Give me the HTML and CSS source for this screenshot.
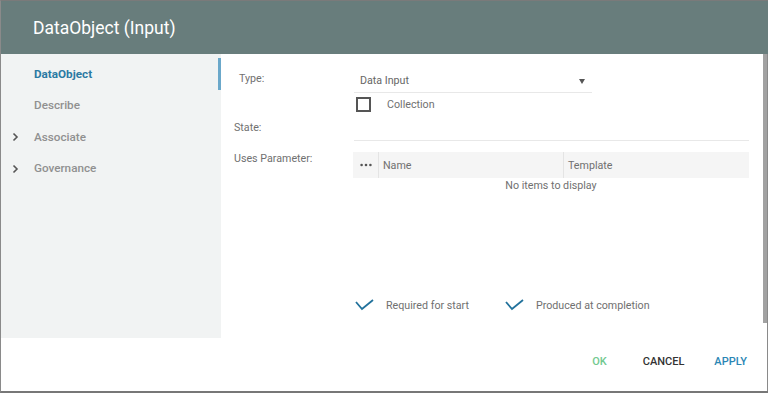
FILE: index.html
```html
<!DOCTYPE html>
<html lang="en">
<head>
  <meta charset="UTF-8">
  <meta name="viewport" content="width=device-width, initial-scale=1.0">
  <title>DataObject (Input)</title>
  <link rel="stylesheet" href="styles.css">
</head>
<body>
  <div class="dialog">
    <div class="dialog-header">DataObject (Input)</div>

    <div class="dialog-body">
      <div class="dialog-main">
        <div class="main">
          <ul class="nav">
            <li class="nav-item active">DataObject</li>
            <li class="nav-item">Describe</li>
            <li class="nav-item">
              <svg class="chevron" width="7" height="10" viewBox="0 0 7 10"><path d="M1.5 1.5 L5 5 L1.5 8.5" fill="none" stroke="#555" stroke-width="1.6"/></svg>
              Associate
            </li>
            <li class="nav-item">
              <svg class="chevron" width="7" height="10" viewBox="0 0 7 10"><path d="M1.5 1.5 L5 5 L1.5 8.5" fill="none" stroke="#555" stroke-width="1.6"/></svg>
              Governance
            </li>
          </ul>

          <div class="content">
            <div class="row row-type">
              <div class="label label-type">Type:</div>
              <div class="field">
                <div class="select">
                  <span>Data Input</span>
                  <span class="arrow"></span>
                </div>
                <div class="checkbox-row">
                  <span class="checkbox"></span>
                  <span>Collection</span>
                </div>
              </div>
            </div>

            <div class="row row-state">
              <div class="label">State:</div>
              <div class="field">
                <div class="input"></div>
              </div>
            </div>

            <div class="row row-params">
              <div class="label">Uses Parameter:</div>
              <div class="field">
                <div class="grid-head">
                  <div class="cell cell-menu">
                    <svg width="12" height="4" viewBox="0 0 12 4"><circle cx="1.6" cy="2" r="1.3" fill="#555"/><circle cx="6" cy="2" r="1.3" fill="#555"/><circle cx="10.4" cy="2" r="1.3" fill="#555"/></svg>
                  </div>
                  <div class="cell cell-name">Name</div>
                  <div class="cell">Template</div>
                </div>
                <div class="grid-empty">No items to display</div>
              </div>
            </div>

            <div class="checks">
              <div class="check">
                <svg width="19" height="12" viewBox="0 0 19 12"><path d="M1 3 L7 10 L18 1" fill="none" stroke="#22729c" stroke-width="1.8"/></svg>
                <span>Required for start</span>
              </div>
              <div class="check">
                <svg width="19" height="12" viewBox="0 0 19 12"><path d="M1 3 L7 10 L18 1" fill="none" stroke="#22729c" stroke-width="1.8"/></svg>
                <span>Produced at completion</span>
              </div>
            </div>
          </div>
        </div>

        <div class="footer">
          <button class="btn btn-ok">OK</button>
          <button class="btn btn-cancel">CANCEL</button>
          <button class="btn btn-apply">APPLY</button>
        </div>
      </div>

      <div class="scrollbar"><div class="thumb"></div></div>
    </div>
  </div>
</body>
</html>
```

FILE: styles.css
```css
body {
  margin: 0;
  font-family: Roboto, "Liberation Sans", sans-serif;
  background-color: #fff;
}
.dialog {
  width: 768px;
  height: 393px;
  box-sizing: border-box;
  border-top: 1px solid #7a7a7a;
  border-left: 1px solid #8a8a8a;
  border-bottom: 2px solid #777;
  display: flex;
  flex-direction: column;
}
.dialog-header {
  height: 53px;
  flex-shrink: 0;
  background-color: #687d7c;
  color: #fff;
  font-size: 17.5px;
  padding-left: 32px;
  display: flex;
  align-items: center;
}
.dialog-body {
  flex: 1;
  display: flex;
}
.dialog-main {
  flex: 1;
  display: flex;
  flex-direction: column;
}
.main {
  height: 284px;
  display: flex;
}
.scrollbar {
  width: 4px;
  border-right: 1px solid #8a8a8a;
}
.thumb {
  height: 269px;
  background-color: #a2a2a2;
}

/* sidebar */
.nav {
  width: 220px;
  margin: 0;
  padding: 4px 0 0 0;
  list-style: none;
  background-color: #f1f3f3;
}
.nav-item {
  position: relative;
  height: 31.5px;
  box-sizing: border-box;
  padding-left: 33px;
  display: flex;
  align-items: center;
  font-size: 11.7px;
  font-weight: 500;
  color: #909090;
}
.nav-item.active {
  color: #2b7aa3;
  font-weight: 700;
  border-right: 3px solid #6ba8ca;
}
.chevron {
  position: absolute;
  left: 11px;
  top: 11px;
}

/* form */
.content {
  flex: 1;
  display: flex;
  flex-direction: column;
  padding: 16px 14px 0 13px;
  font-size: 10.7px;
  color: #707070;
}
.row {
  display: flex;
}
.label {
  width: 120px;
  flex-shrink: 0;
  line-height: 13px;
}
.label-type {
  padding-left: 5px;
  width: 115px;
  margin-top: 2px;
}
.field {
  flex: 1;
}
.select {
  width: 232px;
  height: 22px;
  line-height: 22px;
  padding-left: 6px;
  border-bottom: 1px solid #e8e8e8;
  display: flex;
  justify-content: space-between;
  align-items: center;
  color: #666;
}
.arrow {
  width: 0;
  height: 0;
  margin-right: 7px;
  border-left: 3.5px solid transparent;
  border-right: 3.5px solid transparent;
  border-top: 5px solid #555;
}
.checkbox-row {
  display: flex;
  align-items: center;
  margin-top: 4px;
  height: 15px;
}
.checkbox {
  width: 11px;
  height: 11px;
  border: 2px solid #555;
  margin-left: 2px;
  margin-right: 16px;
}
.row-state {
  margin-top: 9px;
}
.input {
  height: 19px;
  border-bottom: 1px solid #e8e8e8;
}
.row-params {
  margin-top: 11px;
}
.row-params .field {
  margin-left: -1px;
}
.grid-head {
  height: 26px;
  background-color: #f5f5f5;
  display: flex;
  align-items: stretch;
}
.cell {
  display: flex;
  align-items: center;
  padding-left: 4px;
  color: #707070;
}
.cell-menu {
  width: 18px;
  padding-left: 7px;
  border-right: 1px solid #e4e4e4;
}
.cell-name {
  width: 180px;
  border-right: 1px solid #e4e4e4;
}
.grid-empty {
  text-align: center;
  margin-top: 1px;
  line-height: 13px;
}
.checks {
  margin-top: auto;
  margin-bottom: 24px;
  display: flex;
  align-items: center;
  padding-left: 121px;
}
.check {
  display: flex;
  align-items: center;
  height: 18px;
  margin-right: 36px;
}
.check svg {
  margin-right: 12px;
}

/* footer */
.footer {
  flex: 1;
  display: flex;
  justify-content: flex-end;
  align-items: flex-start;
  padding-top: 7px;
  padding-right: 1px;
}
.btn {
  height: 32px;
  padding: 0 15px;
  border: none;
  background: none;
  font-family: Roboto, "Liberation Sans", sans-serif;
  font-size: 11px;
  font-weight: 500;
  cursor: pointer;
}
.btn-ok {
  color: #72c98f;
  margin-right: 6px;
}
.btn-cancel {
  color: #333;
}
.btn-apply {
  color: #2a86b4;
}
```
